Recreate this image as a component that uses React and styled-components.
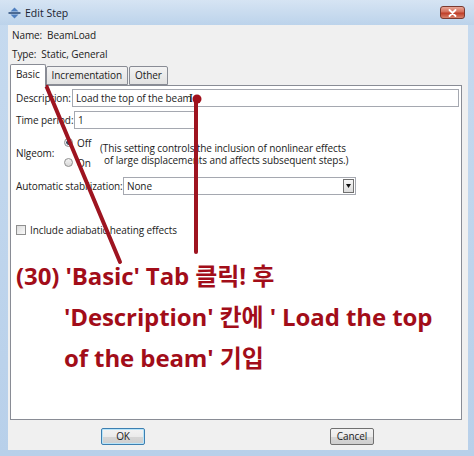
import React from "react";
import styled, { createGlobalStyle } from "styled-components";

const GlobalStyle = createGlobalStyle`
  html, body {
    margin: 0;
    padding: 0;
    background: #ffffff;
  }
  body {
    font-family: "Open Sans", "Noto Sans", sans-serif;
    color: #1b1b1b;
  }
`;

const Window = styled.div`
  position: relative;
  width: 474px;
  height: 456px;
  box-sizing: border-box;
  display: flex;
  flex-direction: column;
  background: linear-gradient(to bottom, #c6daef, #b8d0ea);
  overflow: hidden;
`;

const TitleBar = styled.div`
  height: 25px;
  display: flex;
  align-items: center;
  padding: 0 9px 0 8px;
  background: linear-gradient(to bottom, #d6e4f3, #bcd3eb);
`;

const Title = styled.span`
  margin-left: 4px;
  font-size: 10.5px;
  color: #1a2230;
`;

const CloseButton = styled.div`
  margin-left: auto;
  width: 25px;
  height: 13px;
  box-sizing: border-box;
  border: 1px solid #7a3a30;
  border-radius: 3px;
  display: flex;
  align-items: center;
  justify-content: center;
  background: linear-gradient(
    to bottom,
    #e9a797 0%,
    #d46e5a 45%,
    #bf3d27 55%,
    #d8826c 100%
  );
`;

const Body = styled.div`
  flex: 1;
  margin: 0 6px 6px 8px;
  background: #f0f0f0;
  display: flex;
  flex-direction: column;
  padding-top: 1px;
  font-size: 10px;
  letter-spacing: -0.1px;
`;

const InfoRow = styled.div`
  height: 19px;
  line-height: 19px;
  padding-left: 4px;
  white-space: pre;
`;

const Tabs = styled.div`
  display: flex;
  align-items: flex-end;
  height: 21px;
  margin-left: 2px;
  position: relative;
  z-index: 1;
`;

const Tab = styled.div`
  box-sizing: border-box;
  height: ${(p) => (p.$active ? "23px" : "19px")};
  margin-bottom: ${(p) => (p.$active ? "-2px" : "0")};
  padding: 0 5px;
  line-height: ${(p) => (p.$active ? "19px" : "17px")};
  border: 1px solid #898c95;
  border-bottom: ${(p) => (p.$active ? "none" : "1px solid #898c95")};
  border-radius: 2px 2px 0 0;
  margin-right: ${(p) => (p.$active ? "0" : "1px")};
  background: ${(p) =>
    p.$active ? "#ffffff" : "linear-gradient(to bottom, #f3f3f3, #e2e2e2)"};
`;

const Panel = styled.div`
  height: 335px;
  box-sizing: border-box;
  margin: 0 6px 0 2px;
  padding: 3px 2px 0 5px;
  background: #ffffff;
  border: 1px solid #898c95;
`;

const FieldRow = styled.div`
  display: flex;
  align-items: center;
  height: 18px;
  margin-top: ${(p) => p.$top || 0}px;
`;

const Label = styled.div`
  width: ${(p) => p.$w}px;
  flex-shrink: 0;
  white-space: nowrap;
`;

const TextBox = styled.div`
  box-sizing: border-box;
  height: 18px;
  width: ${(p) => (p.$w ? `${p.$w}px` : "auto")};
  flex: ${(p) => (p.$w ? "none" : "1")};
  border: 1px solid #a5a8b0;
  padding-left: 3px;
  line-height: 16px;
  background: #ffffff;
  white-space: nowrap;
`;

const Caret = styled.span`
  margin-left: -3px;
  font-family: "Liberation Serif", serif;
  font-size: 13px;
  color: #111;
`;

const Nlgeom = styled.div`
  display: flex;
  align-items: center;
  height: 36px;
  margin-top: 6px;
`;

const RadioColumn = styled.div`
  display: flex;
  flex-direction: column;
  gap: 6px;
  width: 36px;
  flex-shrink: 0;
  margin-top: -1px;
`;

const RadioItem = styled.div`
  display: flex;
  align-items: center;
  gap: 4px;
  height: 14px;
`;

const RadioDot = styled.span`
  width: 9px;
  height: 9px;
  box-sizing: border-box;
  border-radius: 50%;
  border: 1px solid #8f8f8f;
  background: ${(p) =>
    p.$on
      ? "radial-gradient(circle, #3c4a5e 0 2px, #e9eef4 2.5px)"
      : "linear-gradient(to bottom, #f2f2f2, #d8d8d8)"};
`;

const Note = styled.div`
  line-height: 12px;
  margin-top: 2px;
  div + div {
    padding-left: 4px;
  }
`;

const Select = styled.div`
  box-sizing: border-box;
  width: 233px;
  height: 18px;
  border: 1px solid #a5a8b0;
  display: flex;
  align-items: center;
  padding-left: 3px;
`;

const SelectText = styled.span`
  flex: 1;
`;

const DropButton = styled.div`
  width: 11px;
  height: 14px;
  margin-right: 1px;
  box-sizing: border-box;
  border: 1px solid #707070;
  background: linear-gradient(to bottom, #f7f7f7, #dcdcdc);
  display: flex;
  align-items: center;
  justify-content: center;
`;

const CheckRow = styled.div`
  display: flex;
  align-items: center;
  gap: 4px;
  height: 14px;
  margin-top: 28px;
`;

const CheckBox = styled.span`
  width: 10px;
  height: 10px;
  box-sizing: border-box;
  border: 1px solid #8f8f8f;
  background: linear-gradient(to bottom right, #dcdcdc, #fafafa);
`;

const Annotation = styled.div`
  margin-top: 18px;
  font-family: "Open Sans", "Noto Sans CJK KR", sans-serif;
  font-weight: 700;
  font-size: 24px;
  line-height: 41px;
  color: #a20d19;
`;

const AnnotationLine = styled.div`
  padding-left: ${(p) => p.$indent || 0}px;
  white-space: nowrap;
`;

const ButtonRow = styled.div`
  display: flex;
  gap: 185px;
  padding: 8px 0 0 93px;
`;

const Button = styled.div`
  box-sizing: border-box;
  width: 44px;
  height: 17px;
  border-radius: 2px;
  border: 1px solid ${(p) => (p.$focus ? "#3c7fb1" : "#707070")};
  box-shadow: ${(p) => (p.$focus ? "inset 0 0 0 1px #b8e4f9" : "none")};
  background: linear-gradient(to bottom, #f3f3f3 0%, #ebebeb 50%, #d6d6d6 51%, #cfcfcf 100%);
  line-height: 15px;
  text-align: center;
`;

const Overlay = styled.svg`
  position: absolute;
  left: 0;
  top: 0;
  pointer-events: none;
`;

function WindowIcon() {
  return (
    <svg width="13" height="12" viewBox="0 0 13 12">
      <path d="M6.5 0.5 L10.5 4.5 H2.5 Z" fill="#4f7fbf" />
      <path d="M6.5 11.5 L10.5 7.5 H2.5 Z" fill="#4f7fbf" />
      <rect x="0.5" y="5.2" width="12" height="1.6" fill="#2d4f7d" />
    </svg>
  );
}

export default function App() {
  return (
    <>
      <GlobalStyle />
      <Window>
        <TitleBar>
          <WindowIcon />
          <Title>Edit Step</Title>
          <CloseButton>
            <svg width="9" height="8" viewBox="0 0 9 8">
              <path
                d="M1.5 1 L7.5 7 M7.5 1 L1.5 7"
                stroke="#ffffff"
                strokeWidth="1.8"
                strokeLinecap="round"
              />
            </svg>
          </CloseButton>
        </TitleBar>
        <Body>
          <InfoRow>Name:  BeamLoad</InfoRow>
          <InfoRow>Type:  Static, General</InfoRow>
          <Tabs>
            <Tab $active>Basic</Tab>
            <Tab>Incrementation</Tab>
            <Tab>Other</Tab>
          </Tabs>
          <Panel>
            <FieldRow>
              <Label $w={56}>Description:</Label>
              <TextBox>
                Load the top of the beam<Caret>I</Caret>
              </TextBox>
            </FieldRow>
            <FieldRow $top={4}>
              <Label $w={58}>Time period:</Label>
              <TextBox $w={122}>1</TextBox>
            </FieldRow>
            <Nlgeom>
              <Label $w={48}>Nlgeom:</Label>
              <RadioColumn>
                <RadioItem>
                  <RadioDot $on />
                  Off
                </RadioItem>
                <RadioItem>
                  <RadioDot />
                  On
                </RadioItem>
              </RadioColumn>
              <Note>
                <div>(This setting controls the inclusion of nonlinear effects</div>
                <div>of large displacements and affects subsequent steps.)</div>
              </Note>
            </Nlgeom>
            <FieldRow $top={6}>
              <Label $w={107}>Automatic stabilization:</Label>
              <Select>
                <SelectText>None</SelectText>
                <DropButton>
                  <svg width="5" height="4" viewBox="0 0 5 4">
                    <path d="M0 0 H5 L2.5 4 Z" fill="#111" />
                  </svg>
                </DropButton>
              </Select>
            </FieldRow>
            <CheckRow>
              <CheckBox />
              Include adiabatic heating effects
            </CheckRow>
            <Annotation>
              <AnnotationLine>(30) 'Basic' Tab 클릭! 후</AnnotationLine>
              <AnnotationLine $indent={48}>
                'Description' 칸에 ' Load the top
              </AnnotationLine>
              <AnnotationLine $indent={48}>of the beam' 기입</AnnotationLine>
            </Annotation>
          </Panel>
          <ButtonRow>
            <Button $focus>OK</Button>
            <Button>Cancel</Button>
          </ButtonRow>
        </Body>
        <Overlay width="474" height="456" viewBox="0 0 474 456">
          <line
            x1="43"
            y1="78"
            x2="120"
            y2="262"
            stroke="#9e1420"
            strokeWidth="4"
            strokeLinecap="round"
          />
          <circle cx="43" cy="78" r="4.5" fill="#a0101c" />
          <line
            x1="196"
            y1="99"
            x2="196"
            y2="252"
            stroke="#9e1420"
            strokeWidth="4"
            strokeLinecap="round"
          />
          <circle cx="197" cy="99" r="4.5" fill="#a0101c" />
        </Overlay>
      </Window>
    </>
  );
}
